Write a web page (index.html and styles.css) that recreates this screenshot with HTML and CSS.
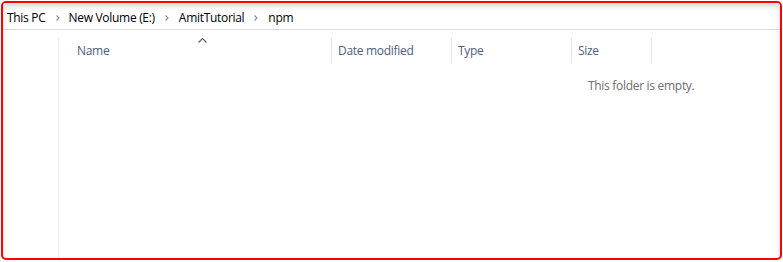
FILE: index.html
```html
<!DOCTYPE html>
<html>

<head>
    <title>npm - File Explorer</title>
    <link rel="stylesheet" href="styles.css">
</head>

<body>
    <div class="frame">
        <div class="window">
            <div class="crumbs">
                <span class="crumb">This PC</span>
                <svg class="sep" width="23" height="8" viewBox="0 0 23 8"><path d="M10.5 1.5 L13 4 L10.5 6.5" fill="none" stroke="#8a8a8a" stroke-width="1.1"/></svg>
                <span class="crumb">New Volume (E:)</span>
                <svg class="sep" width="24" height="8" viewBox="0 0 24 8"><path d="M10.5 1.5 L13 4 L10.5 6.5" fill="none" stroke="#8a8a8a" stroke-width="1.1"/></svg>
                <span class="crumb">AmitTutorial</span>
                <svg class="sep" width="24" height="8" viewBox="0 0 24 8"><path d="M10.5 1.5 L13 4 L10.5 6.5" fill="none" stroke="#8a8a8a" stroke-width="1.1"/></svg>
                <span class="crumb">npm</span>
            </div>
            <div class="main">
                <div class="nav"></div>
                <div class="content">
                    <div class="headers">
                        <div class="col col-name">
                            Name
                            <svg class="caret" width="9" height="5" viewBox="0 0 9 5">
                                <path d="M0.5 4.5 L4.5 0.5 L8.5 4.5" fill="none" stroke="#666" stroke-width="1.2"/>
                            </svg>
                        </div>
                        <div class="col col-date">Date modified</div>
                        <div class="col col-type">Type</div>
                        <div class="col col-size">Size</div>
                    </div>
                    <p class="empty">This folder is empty.</p>
                </div>
            </div>
        </div>
    </div>
</body>

</html>
```

FILE: styles.css
```css
/* Explorer window with a red outline */
body {
  margin: 0;
  background: #fff;
  font-family: "Open Sans", "Noto Sans", sans-serif;
  font-size: 12px;
  letter-spacing: -0.3px;
}

.frame {
  margin: 1px 0 0 1px;
  width: 781px;
  height: 259px;
  box-sizing: border-box;
  border: 2px solid #ff0000;
  border-radius: 5px;
  overflow: hidden;
}

.window {
  height: 100%;
  display: flex;
  flex-direction: column;
  box-shadow: inset 0 0 6px rgba(0, 0, 0, 0.16);
  border-top: 3px solid #e3e3e3;
}

.crumbs {
  height: 23px;
  display: flex;
  align-items: center;
  padding-left: 4px;
  border-bottom: 1px solid #d9d9d9;
  color: #000;
}

.sep {
  flex: none;
}

.main {
  flex: 1;
  display: flex;
}

.nav {
  width: 55px;
  border-right: 1px solid #efefef;
  margin-top: 7px;
}

.content {
  flex: 1;
}

.headers {
  display: flex;
  margin-top: 8px;
  height: 25px;
  padding-left: 18px;
}

.col {
  color: #4c607a;
  border-right: 1px solid #e5e5e5;
  display: flex;
  align-items: center;
  padding-left: 6px;
  position: relative;
}

.col-name {
  width: 254px;
  padding-left: 0;
}

.col-date {
  width: 113px;
}

.col-type {
  width: 113px;
}

.col-size {
  width: 73px;
}

.caret {
  position: absolute;
  left: 121px;
  top: 0;
}

.empty {
  margin: 14px 0 0 529px;
  color: #6d6d6d;
}
```
